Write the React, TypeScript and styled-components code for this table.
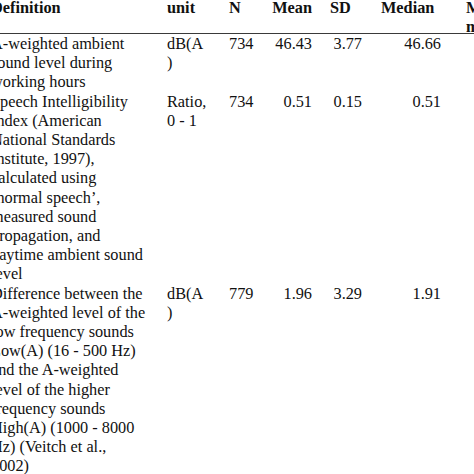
import React from 'react'
import styled, { createGlobalStyle } from 'styled-components'

type Align = 'left' | 'right'

type Column = {
  title: string[]
  width: number
  head: Align
  body: Align
  inset: number
}

type Entry = {
  definition: string[]
  unit: string[]
  n: string
  mean: string
  sd: string
  median: string
}

const columns: Column[] = [
  { title: ['Definition'], width: 176, head: 'left', body: 'left', inset: 0 },
  { title: ['unit'], width: 62, head: 'left', body: 'left', inset: 0 },
  { title: ['N'], width: 36, head: 'left', body: 'left', inset: 0 },
  { title: ['Mean'], width: 65, head: 'right', body: 'right', inset: 18 },
  { title: ['SD'], width: 51, head: 'left', body: 'right', inset: 19 },
  { title: ['Median'], width: 85, head: 'left', body: 'right', inset: 25 },
  { title: ['Mini-', 'mum'], width: 80, head: 'left', body: 'right', inset: 20 },
]

const entries: Entry[] = [
  {
    definition: ['A-weighted ambient', 'sound level during', 'working hours'],
    unit: ['dB(A', ')'],
    n: '734',
    mean: '46.43',
    sd: '3.77',
    median: '46.66',
  },
  {
    definition: [
      'Speech Intelligibility',
      'Index (American',
      'National Standards',
      'Institute, 1997),',
      'calculated using',
      '\u2018normal speech\u2019,',
      'measured sound',
      'propagation, and',
      'daytime ambient sound',
      'level',
    ],
    unit: ['Ratio,', '0 - 1'],
    n: '734',
    mean: '0.51',
    sd: '0.15',
    median: '0.51',
  },
  {
    definition: [
      'Difference between the',
      'A-weighted level of the',
      'low frequency sounds',
      'Low(A) (16 - 500 Hz)',
      'and the A-weighted',
      'level of the higher',
      'frequency sounds',
      'High(A) (1000 - 8000',
      'Hz) (Veitch et al.,',
      '2002)',
    ],
    unit: ['dB(A', ')'],
    n: '779',
    mean: '1.96',
    sd: '3.29',
    median: '1.91',
  },
]

const template = columns.map((c) => `${c.width}px`).join(' ')

const GlobalStyle = createGlobalStyle`
  html, body {
    margin: 0;
    padding: 0;
    background: #fff;
  }
`

const App: React.FC = () => {
  return (
    <>
      <GlobalStyle />
      <Page>
        <Sheet>
          <HeadRow>
            {columns.map((c, i) => (
              <HeadCell key={i} $align={c.head} $inset={c.head === 'right' ? c.inset : 0}>
                {c.title.map((t, j) => (
                  <Line key={j}>{t}</Line>
                ))}
              </HeadCell>
            ))}
          </HeadRow>
          {entries.map((e, i) => {
            const values = [e.definition, e.unit, [e.n], [e.mean], [e.sd], [e.median], []]
            return (
              <BodyRow key={i}>
                {values.map((lines, k) => (
                  <Cell
                    key={k}
                    $align={columns[k].body}
                    $inset={columns[k].body === 'right' ? columns[k].inset : 0}
                  >
                    {lines.map((t, j) => (
                      <Line key={j}>{t}</Line>
                    ))}
                  </Cell>
                ))}
              </BodyRow>
            )
          })}
        </Sheet>
      </Page>
    </>
  )
}

const Page = styled.div`
  width: 474px;
  height: 474px;
  overflow: hidden;
  background: #fff;
`

// the table is cropped on the left, as in the source picture
const Sheet = styled.div`
  margin: -2px 0 0 -9px;
  font-family: 'Liberation Serif', 'Times New Roman', serif;
  font-size: 16.3px;
  line-height: 19.2px;
  color: #111;
`

const HeadRow = styled.div`
  display: grid;
  grid-template-columns: ${template};
  height: 35px;
  border-bottom: 1.5px solid #3a3a3a;
  font-weight: bold;
`

const BodyRow = styled.div`
  display: grid;
  grid-template-columns: ${template};
`

const Cell = styled.div<{ $align: Align; $inset: number }>`
  text-align: ${(p) => p.$align};
  padding-right: ${(p) => p.$inset}px;
  white-space: nowrap;
`

const HeadCell = styled(Cell)`
  overflow: visible;
`

const Line = styled.div``

export default App
